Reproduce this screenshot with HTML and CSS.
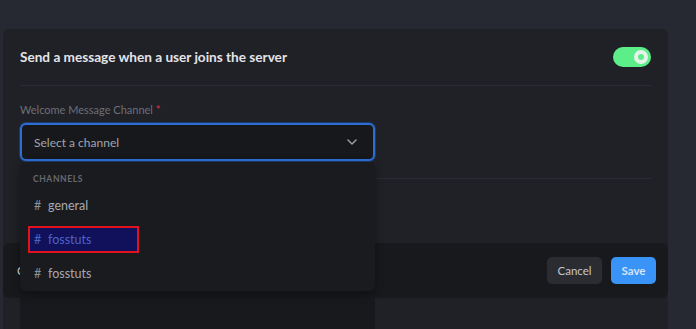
FILE: index.html
```html
<!DOCTYPE html>
<html lang="en">
<head>
  <meta charset="UTF-8">
  <meta name="viewport" content="width=device-width, initial-scale=1.0">
  <title>Welcome messages</title>
  <link rel="stylesheet" href="styles.css">
</head>
<body>
  <section class="card">
    <div class="card-head">
      <h2>Send a message when a user joins the server</h2>
      <span class="toggle on"><span class="knob"></span></span>
    </div>

    <div class="field first">
      <label>Welcome Message Channel <span class="req">*</span></label>
      <div class="select open">
        <span class="placeholder">Select a channel</span>
        <svg class="chevron" width="10" height="6" viewBox="0 0 10 6">
          <polyline points="1,1 5,5 9,1" fill="none" stroke="#9c9ca4" stroke-width="1.5" stroke-linecap="round" stroke-linejoin="round"/>
        </svg>
        <div class="menu">
          <div class="menu-title">Channels</div>
          <div class="menu-item"><span class="hash">#</span>general</div>
          <div class="menu-item active"><span class="hash">#</span>fosstuts</div>
          <div class="menu-item"><span class="hash">#</span>fosstuts</div>
        </div>
      </div>
    </div>

    <div class="field">
      <div class="textarea"></div>
    </div>

    <div class="save-bar">
      <span class="save-text">Careful — you have unsaved changes!</span>
      <div class="actions">
        <button class="btn btn-cancel">Cancel</button>
        <button class="btn btn-save">Save</button>
      </div>
    </div>
  </section>
</body>
</html>
```

FILE: styles.css
```css
body {
  font-family: 'Lato', 'Liberation Sans', Arial, sans-serif;
  background: #262832;
  color: #e4e4e8;
  margin: 0;
  padding: 0;
  height: 100vh;
  overflow: hidden;
}
.card {
  position: relative;
  background: #1f2127;
  border-radius: 6px 6px 0 0;
  margin: 29px 28px 0 3px;
  padding: 0 17px;
  min-height: 320px;
}
.card-head {
  display: flex;
  align-items: center;
  justify-content: space-between;
  padding: 18px 0;
  border-bottom: 1px solid #2a2c33;
}
.card-head h2 {
  margin: 0;
  font-size: 13.6px;
  font-weight: bold;
  color: #e4e4e8;
}
.toggle {
  width: 38px;
  height: 20px;
  border-radius: 10px;
  background: #5cef89;
  display: flex;
  align-items: center;
  justify-content: flex-end;
  padding: 0 3px;
  box-sizing: border-box;
}
.toggle .knob {
  width: 6px;
  height: 6px;
  border-radius: 50%;
  background: #5cef89;
  border: 4px solid #e9f1eb;
}
.field {
  padding-top: 17px;
}
.field.first {
  padding-bottom: 17px;
  border-bottom: 1px solid #2a2c33;
}
.field label {
  display: block;
  font-size: 11px;
  line-height: 14px;
  color: #6d6f78;
  margin-bottom: 6px;
}
.field .req {
  color: #e0304c;
}
.select {
  position: relative;
  width: 355px;
  height: 38px;
  box-sizing: border-box;
  background: #17181c;
  border: 2px solid #2e6dd3;
  border-radius: 6px;
  box-shadow: 0 0 0 1px #1e3a66;
  display: flex;
  align-items: center;
  justify-content: space-between;
  padding: 0 16px 0 12px;
  z-index: 5;
}
.select .placeholder {
  font-size: 12px;
  color: #a3a4ab;
}
.menu {
  position: absolute;
  top: calc(100% + 3px);
  left: -2px;
  right: -2px;
  height: 129px;
  box-sizing: border-box;
  background: #1a1b1f;
  border-radius: 6px;
  box-shadow: 0 4px 10px rgba(0, 0, 0, 0.35);
  padding: 11px 0 0 0;
}
.menu-title {
  font-size: 8.5px;
  line-height: 12px;
  font-weight: bold;
  letter-spacing: 0.6px;
  text-transform: uppercase;
  color: #676971;
  padding-left: 13px;
  margin-bottom: 7px;
}
.menu-item {
  display: flex;
  align-items: center;
  width: 111px;
  height: 27px;
  box-sizing: border-box;
  margin: 0 0 7px 8px;
  padding: 0 4px;
  border: 2px solid transparent;
  font-size: 12.5px;
  color: #a8a9b0;
}
.menu-item .hash {
  width: 14px;
  color: #8e9098;
}
.menu-item.active {
  background: #10105b;
  border-color: #e3121f;
  color: #4d63c9;
}
.menu-item.active .hash {
  color: #4d63c9;
}
.textarea {
  width: 355px;
  height: 160px;
  margin-top: 20px;
  background: #18191c;
  border-radius: 6px;
}
.save-bar {
  position: absolute;
  top: 214px;
  left: 0;
  right: 0;
  height: 55px;
  background: #18191c;
  border-radius: 6px;
  display: flex;
  align-items: center;
  justify-content: space-between;
  padding: 0 12px 0 14px;
  box-sizing: border-box;
  z-index: 2;
}
.save-text {
  font-size: 12px;
  color: #d6d7dc;
}
.actions {
  display: flex;
  gap: 9px;
}
.btn {
  font-family: inherit;
  border: none;
  border-radius: 5px;
  height: 27px;
  font-size: 11.5px;
  cursor: pointer;
}
.btn-cancel {
  width: 55px;
  background: #2b2c31;
  color: #c6c7cd;
}
.btn-save {
  width: 45px;
  background: #3a93f7;
  color: #d2e4fb;
  font-weight: bold;
}
```
